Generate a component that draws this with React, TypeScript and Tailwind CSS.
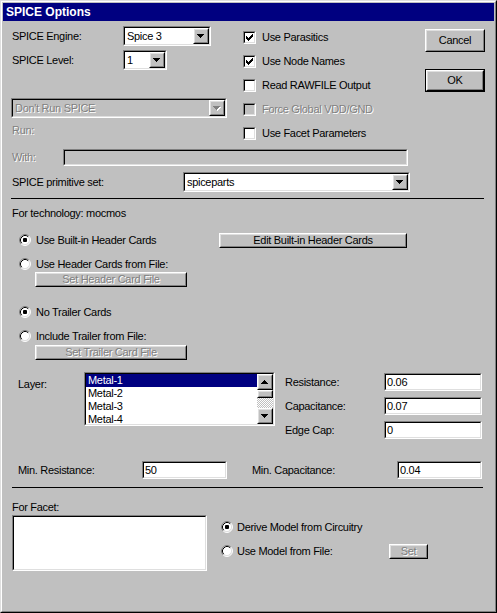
import React from "react";

const dis = "text-[#808080] [text-shadow:1px_1px_0_#fff]";

function Sunken({ className = "", inner = "bg-white", children }: { className?: string; inner?: string; children?: React.ReactNode }) {
  return (
    <div className={`border border-t-[#808080] border-l-[#808080] border-b-white border-r-white ${className}`}>
      <div className={`h-full w-full overflow-hidden border border-t-black border-l-black border-b-[#dfdfdf] border-r-[#dfdfdf] ${inner}`}>
        {children}
      </div>
    </div>
  );
}

function Raised({ className = "", children }: { className?: string; children?: React.ReactNode }) {
  return (
    <div className={`shrink-0 border border-t-white border-l-white border-b-black border-r-black bg-[#c0c0c0] ${className}`}>
      <div className="flex h-full w-full items-center justify-center border border-t-[#dfdfdf] border-l-[#dfdfdf] border-b-[#808080] border-r-[#808080]">
        {children}
      </div>
    </div>
  );
}

const downPath = "M0 0h7v1h-1v1h-1v1h-1v1h-1v-1h-1v-1h-1v-1h-1z";
const upPath = "M3 0h1v1h1v1h1v1h1v1h-7v-1h1v-1h1v-1h1z";

function Arrow({ up = false, disabled = false }: { up?: boolean; disabled?: boolean }) {
  const d = up ? upPath : downPath;
  return (
    <svg width="8" height="5" viewBox="0 0 8 5">
      {disabled && <path d={d} fill="#fff" transform="translate(1 1)" />}
      <path d={d} fill={disabled ? "#808080" : "#000"} />
    </svg>
  );
}

function Combo({ className, text, disabled = false }: { className: string; text: string; disabled?: boolean }) {
  return (
    <Sunken className={`h-[20px] ${className}`} inner={disabled ? "bg-[#c0c0c0]" : "bg-white"}>
      <div className="flex h-full items-center">
        <span className={`flex-1 truncate pl-[2px] ${disabled ? dis : ""}`}>{text}</span>
        <Raised className="h-[16px] w-[16px]">
          <Arrow disabled={disabled} />
        </Raised>
      </div>
    </Sunken>
  );
}

function Check({ on = false, disabled = false, label }: { on?: boolean; disabled?: boolean; label: string }) {
  const cols = [2, 3, 4, 3, 2, 1, 0];
  return (
    <div className="flex h-[13px] items-center gap-[6px]">
      <Sunken className="h-[13px] w-[13px]" inner={disabled ? "bg-[#c0c0c0]" : "bg-white"}>
        {on && (
          <svg width="9" height="9" viewBox="0 0 9 9">
            {cols.map((y, x) => (
              <rect key={x} x={x + 1} y={y + 1} width="1" height="3" fill="#000" />
            ))}
          </svg>
        )}
      </Sunken>
      <span className={disabled ? dis : ""}>{label}</span>
    </div>
  );
}

function Radio({ on = false }: { on?: boolean }) {
  return (
    <svg width="12" height="12" viewBox="0 0 12 12" className="shrink-0">
      <circle cx="6" cy="6" r="5" fill="#fff" />
      <path d="M2.11 9.89 A5.5 5.5 0 0 1 9.89 2.11" stroke="#808080" fill="none" />
      <path d="M9.89 2.11 A5.5 5.5 0 0 1 2.11 9.89" stroke="#fff" fill="none" />
      <path d="M2.82 9.18 A4.5 4.5 0 0 1 9.18 2.82" stroke="#000" fill="none" />
      <path d="M9.18 2.82 A4.5 4.5 0 0 1 2.82 9.18" stroke="#dfdfdf" fill="none" />
      {on && <rect x="4" y="4" width="4" height="4" rx="1" fill="#000" />}
    </svg>
  );
}

function Field({ className, value }: { className: string; value: string }) {
  return (
    <Sunken className={`h-[18px] ${className}`}>
      <div className="flex h-full items-center pl-px">{value}</div>
    </Sunken>
  );
}

export default function App() {
  const layers = ["Metal-1", "Metal-2", "Metal-3", "Metal-4"];

  return (
    <div className="h-[613px] w-[497px] border border-t-[#dfdfdf] border-l-[#dfdfdf] border-b-black border-r-black bg-[#c0c0c0] font-['Liberation_Sans',Arial,sans-serif] text-[11px] leading-[13px] tracking-[-0.3px] text-black">
      <div className="h-full w-full border border-t-white border-l-white border-b-[#808080] border-r-[#808080] p-px">
        {/* Title bar */}
        <div className="flex h-[18px] items-center bg-[#000080] pl-[3px] text-[12px] font-bold tracking-normal text-white">
          SPICE Options
        </div>

        <div className="pl-[8px]">
          {/* Top block */}
          <div className="mt-[5px] flex h-[123px]">
            <div className="w-[232px]">
              <div className="flex h-[20px] items-center">
                <span className="w-[112px] pl-px">SPICE Engine:</span>
                <Combo className="w-[88px]" text="Spice 3" />
              </div>
              <div className="mt-[4px] flex h-[20px] items-center">
                <span className="w-[112px] pl-px">SPICE Level:</span>
                <Combo className="w-[44px]" text="1" />
              </div>
              <Combo className="mt-[28px] w-[216px]" text="Don't Run SPICE" disabled />
              <div className={`mt-[6px] pl-px ${dis}`}>Run:</div>
            </div>

            <div className="flex w-[182px] flex-col gap-[11px] pt-[5px]">
              <Check on label="Use Parasitics" />
              <Check on label="Use Node Names" />
              <Check label="Read RAWFILE Output" />
              <Check disabled label="Force Global VDD/GND" />
              <Check label="Use Facet Parameters" />
            </div>

            <div className="w-[60px] pt-[3px]">
              <Raised className="h-[23px] w-[60px]">Cancel</Raised>
              <div className="mt-[17px] h-[23px] w-[60px] border border-black">
                <Raised className="h-full w-full">OK</Raised>
              </div>
            </div>
          </div>

          {/* With row */}
          <div className="flex h-[17px] items-center">
            <span className={`w-[52px] pl-px ${dis}`}>With:</span>
            <Sunken className="h-[17px] w-[345px]" inner="bg-[#c0c0c0]" />
          </div>

          {/* Primitive set */}
          <div className="mt-[6px] flex h-[20px] items-center">
            <span className="w-[172px] pl-px">SPICE primitive set:</span>
            <Combo className="w-[227px]" text="spiceparts" />
          </div>

          <div className="mt-[6px] h-px w-[473px] bg-black" />

          {/* Technology */}
          <div className="mt-[8px] pl-px">For technology: mocmos</div>

          <div className="mt-[12px] flex h-[16px] items-center pl-[8px]">
            <Radio on />
            <span className="ml-[5px] w-[183px]">Use Built-in Header Cards</span>
            <Raised className="h-[15px] w-[188px]">Edit Built-in Header Cards</Raised>
          </div>
          <div className="mt-[8px] flex h-[16px] items-center pl-[8px]">
            <Radio />
            <span className="ml-[5px]">Use Header Cards from File:</span>
          </div>
          <Raised className="ml-[24px] h-[15px] w-[152px]">
            <span className={dis}>Set Header Card File</span>
          </Raised>

          <div className="mt-[17px] flex h-[16px] items-center pl-[8px]">
            <Radio on />
            <span className="ml-[5px]">No Trailer Cards</span>
          </div>
          <div className="mt-[8px] flex h-[16px] items-center pl-[8px]">
            <Radio />
            <span className="ml-[5px]">Include Trailer from File:</span>
          </div>
          <Raised className="ml-[24px] mt-px h-[15px] w-[152px]">
            <span className={dis}>Set Trailer Card File</span>
          </Raised>

          {/* Layers */}
          <div className="mt-[12px] flex">
            <span className="w-[73px] pl-[7px] pt-[6px]">Layer:</span>
            <Sunken className="h-[54px] w-[191px]">
              <div className="flex h-full">
                <div className="flex-1 overflow-hidden">
                  {layers.map((l, i) => (
                    <div
                      key={l}
                      className={`h-[13px] px-[2px] ${i === 0 ? "bg-[#000080] text-white" : ""}`}
                    >
                      {l}
                    </div>
                  ))}
                </div>
                <div className="flex w-[16px] flex-col">
                  <Raised className="h-[16px] w-[16px]">
                    <Arrow up />
                  </Raised>
                  <Raised className="h-[8px] w-[16px]" />
                  <div className="flex-1 [background:repeating-conic-gradient(#fff_0_25%,#c0c0c0_0_50%)_0_0/2px_2px]" />
                  <Raised className="h-[16px] w-[16px]">
                    <Arrow />
                  </Raised>
                </div>
              </div>
            </Sunken>
            <div className="ml-[10px] flex flex-col gap-[6px] pt-px">
              {[
                ["Resistance:", "0.06"],
                ["Capacitance:", "0.07"],
                ["Edge Cap:", "0"],
              ].map(([k, v]) => (
                <div key={k} className="flex h-[18px] items-center">
                  <span className="w-[99px]">{k}</span>
                  <Field className="w-[98px]" value={v} />
                </div>
              ))}
            </div>
          </div>

          <div className="mt-[22px] flex h-[18px] items-center">
            <span className="w-[131px] pl-[7px]">Min. Resistance:</span>
            <Field className="w-[85px]" value="50" />
            <span className="ml-[25px] w-[145px]">Min. Capacitance:</span>
            <Field className="w-[85px]" value="0.04" />
          </div>

          <div className="ml-px mt-[8px] h-px w-[471px] bg-black" />

          {/* Facet */}
          <div className="mt-[13px] pl-px">For Facet:</div>
          <div className="mt-px flex">
            <Sunken className="ml-px h-[56px] w-[195px]" />
            <div className="ml-[14px] flex flex-col gap-[8px] pt-[4px]">
              <div className="flex h-[16px] items-center">
                <Radio on />
                <span className="ml-[4px]">Derive Model from Circuitry</span>
              </div>
              <div className="flex h-[16px] items-center">
                <Radio />
                <span className="ml-[4px] w-[152px]">Use Model from File:</span>
                <Raised className="h-[15px] w-[39px]">
                  <span className={dis}>Set</span>
                </Raised>
              </div>
            </div>
          </div>
        </div>
      </div>
    </div>
  );
}
